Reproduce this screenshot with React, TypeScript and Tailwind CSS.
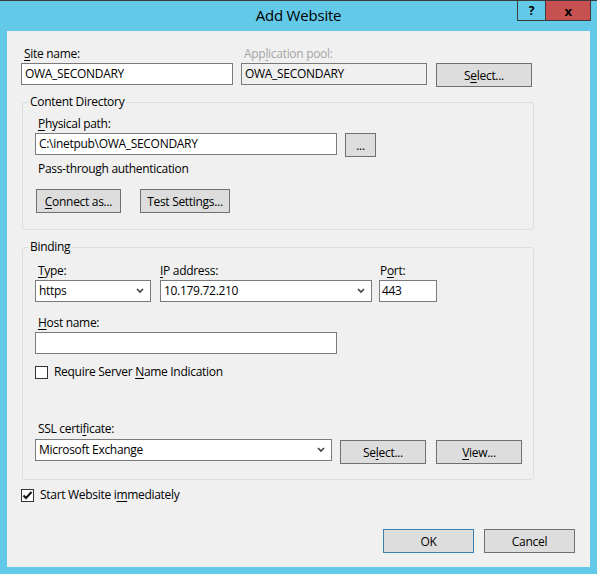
import { ReactNode } from 'react';

const U = ({ children }: { children: ReactNode }) => (
  <span className="underline underline-offset-[2px] decoration-[1px]">{children}</span>
);

const Label = ({ children, className = '' }: { children: ReactNode; className?: string }) => (
  <div className={`h-4 leading-[20px] whitespace-nowrap ${className}`}>{children}</div>
);

const Button = ({
  children,
  className = '',
  primary = false,
}: {
  children: ReactNode;
  className?: string;
  primary?: boolean;
}) => (
  <div
    className={`h-[24px] pt-[2px] flex items-center justify-center bg-[#dddddd] border leading-4 whitespace-nowrap ${
      primary ? 'border-[#3c7fb1]' : 'border-[#707070]'
    } ${className}`}
  >
    {children}
  </div>
);

const TextBox = ({
  value,
  className = '',
  disabled = false,
}: {
  value?: string;
  className?: string;
  disabled?: boolean;
}) => (
  <div
    className={`h-[22px] border border-[#7a7a7a] pl-[3px] leading-[19px] whitespace-nowrap ${
      disabled ? 'bg-[#f0f0f0]' : 'bg-white'
    } ${className}`}
  >
    {value}
  </div>
);

const Select = ({ value, className = '' }: { value: string; className?: string }) => (
  <div
    className={`h-[22px] border border-[#7a7a7a] bg-white pl-[3px] pr-[6px] flex items-center justify-between ${className}`}
  >
    <span className="leading-[18px]">{value}</span>
    <svg width="8" height="6" viewBox="0 0 8 6">
      <polyline points="1,1 4,4 7,1" fill="none" stroke="#454545" strokeWidth="1.7" />
    </svg>
  </div>
);

const CheckBox = ({ checked = false }: { checked?: boolean }) => (
  <div className="w-[13px] h-[13px] border border-[#333333] bg-white flex items-center justify-center">
    {checked && (
      <svg width="11" height="11" viewBox="0 0 11 11">
        <path d="M1.5 5.5 L4 8 L9.5 2" fill="none" stroke="#111111" strokeWidth="2" />
      </svg>
    )}
  </div>
);

const GroupBox = ({
  title,
  children,
  className = '',
}: {
  title: string;
  children: ReactNode;
  className?: string;
}) => (
  <fieldset className={`ml-[1px] w-[512px] border border-[#d5dfe5] rounded-[3px] ${className}`}>
    <legend className="ml-[5px] px-[2px] h-4 leading-4">{title}</legend>
    {children}
  </fieldset>
);

export default function App() {
  return (
    <div className="w-[597px] h-[574px] bg-[#63c9e9] border-t border-[#3b3b3b] flex flex-col font-['Open_Sans',sans-serif] text-[12px] tracking-[-0.3px] text-black">
      {/* title bar */}
      <div className="h-[30px] grid grid-cols-[1fr_auto_1fr]">
        <div />
        <div className="pt-[4px] text-[15px] leading-[20px] tracking-[-0.2px]">Add Website</div>
        <div className="flex justify-end items-start pr-[6px]">
          <div className="w-[28px] h-[20px] border-l border-b border-[#3b3b3b] flex items-center justify-center font-bold text-[12px] leading-4">
            ?
          </div>
          <div className="w-[46px] h-[20px] border-l border-r border-b border-[#3b3b3b] bg-[#c75050] flex items-center justify-center font-bold text-[13px] leading-4">
            x
          </div>
        </div>
      </div>

      {/* client area */}
      <div className="mx-[7px] h-[536px] bg-[#f0f0f0] pt-[13px] pl-[14px] flex flex-col">
        <div className="flex items-start">
          <div className="w-[212px]">
            <Label className="pl-[3px]">
              <U>S</U>ite name:
            </Label>
            <TextBox value="OWA_SECONDARY" className="mt-[3px]" />
          </div>
          <div className="w-[186px] ml-[8px]">
            <Label className="pl-[3px] text-[#a6a6a6]">
              App<U>l</U>ication pool:
            </Label>
            <TextBox value="OWA_SECONDARY" className="mt-[3px]" disabled />
          </div>
          <Button className="w-[96px] ml-[9px] mt-[19px]">
            S<U>e</U>lect...
          </Button>
        </div>

        <GroupBox title="Content Directory" className="mt-[7px]">
          <div className="pl-[12px] pt-[4px] pb-[16px]">
            <Label className="pl-[3px]">
              <U>P</U>hysical path:
            </Label>
            <div className="flex items-start mt-[3px]">
              <TextBox value="C:\inetpub\OWA_SECONDARY" className="w-[302px]" />
              <Button className="w-[31px] ml-[8px]">...</Button>
            </div>
            <Label className="mt-[2px] pl-[3px]">Pass-through authentication</Label>
            <div className="flex mt-[14px]">
              <Button className="w-[85px] ml-[1px]">
                <U>C</U>onnect as...
              </Button>
              <Button className="w-[90px] ml-[19px]">Test Settings...</Button>
            </div>
          </div>
        </GroupBox>

        <GroupBox title="Binding" className="mt-[9px]">
          <div className="pl-[12px] pt-[6px] pb-[15px]">
            <div className="flex items-start">
              <div className="w-[116px]">
                <Label className="pl-[3px]">
                  <U>T</U>ype:
                </Label>
                <Select value="https" className="mt-[3px]" />
              </div>
              <div className="w-[212px] ml-[9px]">
                <Label>
                  <U>I</U>P address:
                </Label>
                <Select value="10.179.72.210" className="mt-[3px]" />
              </div>
              <div className="w-[58px] ml-[7px]">
                <Label className="pl-[1px]">
                  P<U>o</U>rt:
                </Label>
                <TextBox value="443" className="mt-[3px] !pl-[2px]" />
              </div>
            </div>

            <Label className="mt-[11px] pl-[3px]">
              <U>H</U>ost name:
            </Label>
            <TextBox className="mt-[3px] w-[302px]" />

            <div className="mt-[10px] h-4 flex items-center gap-[6px]">
              <CheckBox />
              <span className="leading-4">
                Require Server <U>N</U>ame Indication
              </span>
            </div>

            <Label className="mt-[39px] pl-[3px]">
              SSL certi<U>f</U>icate:
            </Label>
            <div className="mt-[4px] flex items-start">
              <Select value="Microsoft Exchange" className="w-[297px]" />
              <Button className="w-[86px] ml-[8px] mt-[1px]">
                Se<U>l</U>ect...
              </Button>
              <Button className="w-[86px] ml-[10px] mt-[1px]">
                <U>V</U>iew...
              </Button>
            </div>
          </div>
        </GroupBox>

        <div className="mt-[7px] h-4 flex items-center gap-[6px]">
          <CheckBox checked />
          <span className="leading-4">
            Start Website i<U>m</U>mediately
          </span>
        </div>

        <div className="mt-[26px] flex justify-end pr-[15px] gap-[10px]">
          <Button className="w-[91px]" primary>
            OK
          </Button>
          <Button className="w-[91px]">Cancel</Button>
        </div>
      </div>
    </div>
  );
}
